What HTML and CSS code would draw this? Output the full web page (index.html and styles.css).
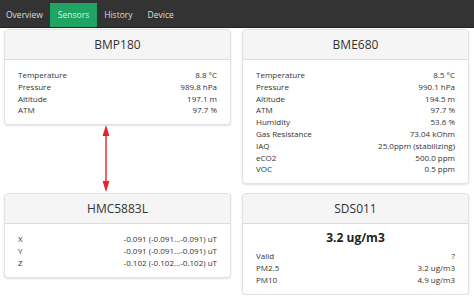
FILE: index.html
```html
<!DOCTYPE html>
<html lang="en">
<head>
  <meta charset="UTF-8">
  <title>Sensors</title>
  <link rel="stylesheet" href="styles.css">
</head>
<body>
  <nav class="topnav">
    <a href="#">Overview</a>
    <a href="#" class="active">Sensors</a>
    <a href="#">History</a>
    <a href="#">Device</a>
  </nav>
  <main class="grid">
    <div class="card-wrap">
      <div class="card">
        <div class="card-head">BMP180</div>
        <div class="card-body">
          <div class="row"><span>Temperature</span><span>8.8 °C</span></div>
          <div class="row"><span>Pressure</span><span>989.8 hPa</span></div>
          <div class="row"><span>Altitude</span><span>197.1 m</span></div>
          <div class="row"><span>ATM</span><span>97.7 %</span></div>
        </div>
      </div>
      <svg class="link-arrow" width="12" height="68" viewBox="0 0 12 68">
        <line x1="6" y1="8" x2="6" y2="60" stroke="#e8232a" stroke-width="1.4"/>
        <polygon points="6,0 2.6,11 9.4,11" fill="#e8232a"/>
        <polygon points="6,67 2.6,56 9.4,56" fill="#e8232a"/>
      </svg>
    </div>
    <div class="card">
      <div class="card-head">BME680</div>
      <div class="card-body">
        <div class="row"><span>Temperature</span><span>8.5 °C</span></div>
        <div class="row"><span>Pressure</span><span>990.1 hPa</span></div>
        <div class="row"><span>Altitude</span><span>194.5 m</span></div>
        <div class="row"><span>ATM</span><span>97.7 %</span></div>
        <div class="row"><span>Humidity</span><span>53.6 %</span></div>
        <div class="row"><span>Gas Resistance</span><span>73.04 kOhm</span></div>
        <div class="row"><span>IAQ</span><span>25.0ppm (stabilizing)</span></div>
        <div class="row"><span>eCO2</span><span>500.0 ppm</span></div>
        <div class="row"><span>VOC</span><span>0.5 ppm</span></div>
      </div>
    </div>
    <div class="card">
      <div class="card-head">HMC5883L</div>
      <div class="card-body">
        <div class="row"><span>X</span><span>-0.091 (-0.091...-0.091) uT</span></div>
        <div class="row"><span>Y</span><span>-0.091 (-0.091...-0.091) uT</span></div>
        <div class="row"><span>Z</span><span>-0.102 (-0.102...-0.102) uT</span></div>
      </div>
    </div>
    <div class="card">
      <div class="card-head">SDS011</div>
      <div class="card-body">
        <div class="big-value">3.2 ug/m3</div>
        <div class="row"><span>Valid</span><span>?</span></div>
        <div class="row"><span>PM2.5</span><span>3.2 ug/m3</span></div>
        <div class="row"><span>PM10</span><span>4.9 ug/m3</span></div>
      </div>
    </div>
  </main>
</body>
</html>
```

FILE: styles.css
```css
* {
  margin: 0;
  padding: 0;
  box-sizing: border-box;
  font-family: 'Open Sans', sans-serif;
}
body {
  background: #fff;
  color: #333;
}
.topnav {
  height: 28px;
  background: #333;
  border-bottom: 1px solid #222;
  display: flex;
  align-items: flex-end;
}
.topnav a {
  display: block;
  height: 24px;
  line-height: 24px;
  padding: 0 7.5px;
  font-size: 8.5px;
  color: #ddd;
  text-decoration: none;
}
.topnav a:first-child {
  padding-left: 6px;
}
.topnav a.active {
  background: #1fa463;
  color: #d8f3e4;
}
.grid {
  display: grid;
  grid-template-columns: 1fr 1fr;
  column-gap: 11px;
  row-gap: 9px;
  padding: 1px 5px 0 4px;
  align-items: start;
}
.card-wrap {
  position: relative;
}
.card {
  background: #fff;
  border: 1px solid #e2e2e2;
  border-radius: 4px;
  box-shadow: 0 1px 2px rgba(0,0,0,0.12);
  overflow: hidden;
}
.card-head {
  background: #f5f5f5;
  border-bottom: 1px solid #dcdcdc;
  text-align: center;
  font-size: 12px;
  line-height: 16px;
  padding: 7px 0 6px;
  color: #333;
}
.card-body {
  padding: 9px 13px 8px;
}
.row {
  display: flex;
  justify-content: space-between;
  font-size: 8px;
  line-height: 11.8px;
  color: #333;
}
.big-value {
  text-align: center;
  font-size: 12px;
  font-weight: bold;
  line-height: 18px;
  color: #222;
  margin: -4px 0 3px;
}
.link-arrow {
  position: absolute;
  left: 96px;
  top: 100%;
}
```
